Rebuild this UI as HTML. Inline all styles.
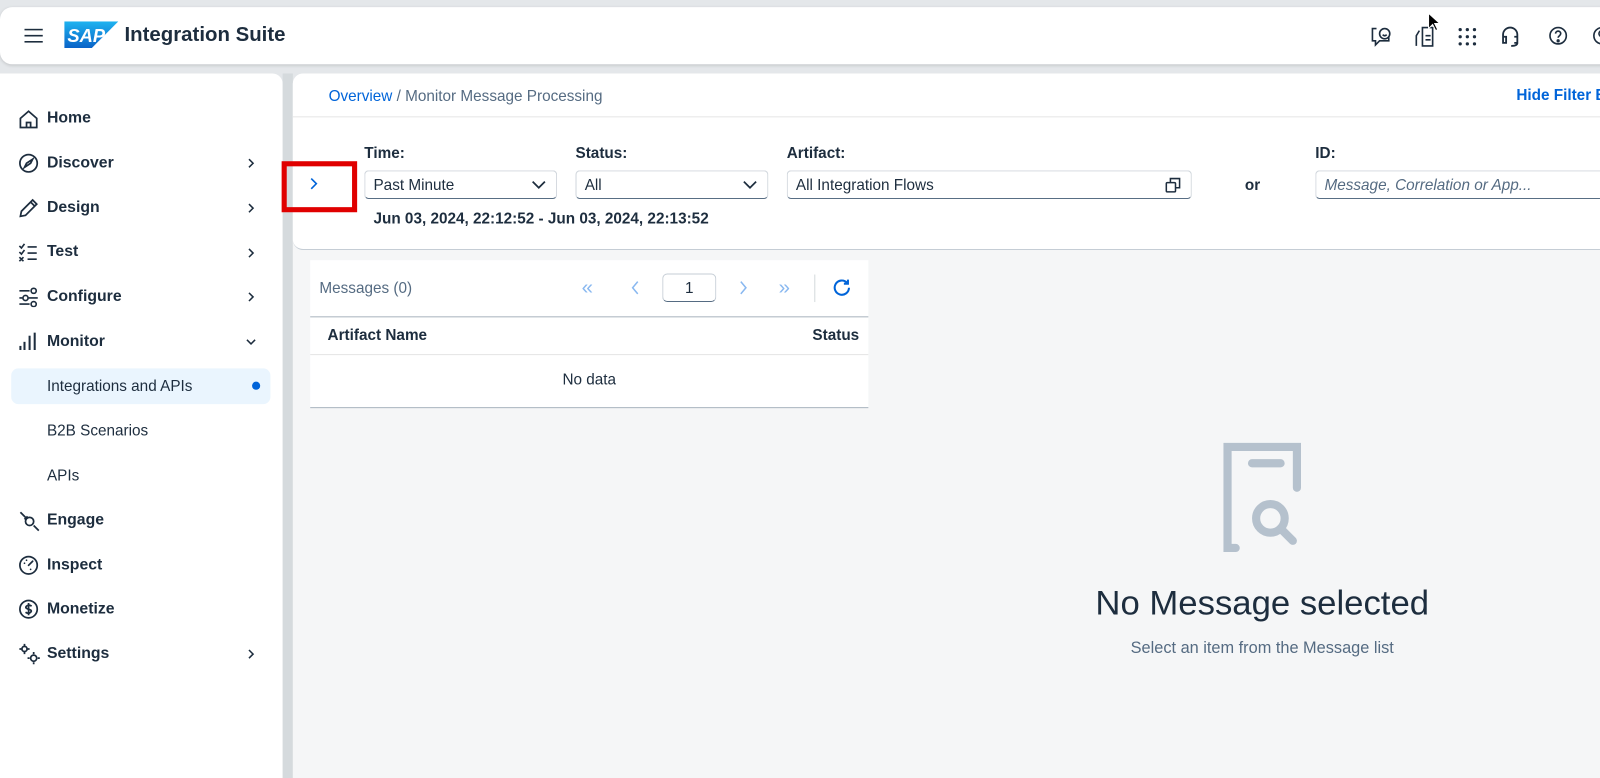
<!DOCTYPE html>
<html><head><meta charset="utf-8"><style>
*{box-sizing:border-box;margin:0;padding:0}
html,body{width:1600px;height:778px;overflow:hidden;background:#e4e7ea}
#c{position:absolute;left:0;top:0;width:1600px;height:778px;overflow:hidden}
#w{position:absolute;left:0;top:0;width:1568px;height:763px;overflow:hidden;transform:scale(1.0204);transform-origin:0 0;font-family:"Liberation Sans",sans-serif;color:#1d2d3e}
.hdr{position:absolute;left:0;top:7px;width:1620px;height:56px;background:#fff;border-radius:12px;box-shadow:0 1px 3px rgba(0,0,0,.15)}
.side{position:absolute;left:0;top:72px;width:277px;height:720px;background:#fff;border-radius:0 10px 0 0}
.main{position:absolute;left:287px;top:72px;width:1330px;height:720px;background:#f5f6f7;border-radius:10px 0 0 0}
.fb{position:absolute;left:0;top:0;width:1330px;height:173px;background:#fff;border-radius:10px 0 0 10px;border-bottom:1px solid #c5cdd5}
.ab{position:absolute}
.nav{position:absolute;left:46px;font-size:15.5px;font-weight:bold}
.ic{position:absolute;left:18px}
.chev{position:absolute;left:240px}
.sub{position:absolute;left:46px;font-size:15px}
.lbl{position:absolute;font-size:15px;font-weight:bold}
.inp{position:absolute;height:28px;border:1px solid #d0d6dc;border-bottom:1px solid #556b82;border-radius:4px;background:#fff;font-size:15px;padding:5px 8px}
</style></head><body><div id="c"><div id="w">
<div class="hdr">
 <svg class="ab" style="left:24px;top:21px" width="18" height="14"><path d="M0 1h18M0 7h18M0 13h18" stroke="#1d2d3e" stroke-width="1.6"/></svg>
 <svg class="ab" style="left:63px;top:14px" width="53" height="26"><defs><linearGradient id="g" x1="0" y1="0" x2="0" y2="1"><stop offset="0" stop-color="#1eb3f0"/><stop offset="1" stop-color="#0a63c8"/></linearGradient></defs><path d="M0 0H53L27 26H0Z" fill="url(#g)"/><text x="3" y="20" font-family="Liberation Sans" font-weight="bold" font-style="italic" font-size="18" fill="#fff">SAP</text></svg>
 <div class="ab" style="left:122px;top:16px;font-size:20px;font-weight:bold">Integration Suite</div>
 <svg class="ab" style="left:1343px;top:18px" width="22" height="22" fill="none" stroke="#1d2d3e" stroke-width="1.6"><path d="M6 3H2v12h3v4l4-4h9v-4"/><circle cx="14" cy="8" r="5"/><path d="M12 9q2 2 4 0"/></svg>
 <svg class="ab" style="left:1386px;top:16px" width="22" height="24" fill="none" stroke="#1d2d3e" stroke-width="1.6"><path d="M5 7L2 12v10M8 4h10v18H8zM11 12h5M11 16h5"/></svg>
 <svg class="ab" style="left:1429px;top:20px" width="18" height="18" fill="#1d2d3e"><circle cx="2" cy="2" r="1.6"/><circle cx="9" cy="2" r="1.6"/><circle cx="16" cy="2" r="1.6"/><circle cx="2" cy="9" r="1.6"/><circle cx="9" cy="9" r="1.6"/><circle cx="16" cy="9" r="1.6"/><circle cx="2" cy="16" r="1.6"/><circle cx="9" cy="16" r="1.6"/><circle cx="16" cy="16" r="1.6"/></svg>
 <svg class="ab" style="left:1470px;top:18px" width="20" height="22" fill="none" stroke="#1d2d3e" stroke-width="1.8"><path d="M3 12V9a7 7 0 0114 0v3M3 11h3v6H3zM14 11h3v6h-3M17 17q0 3-6 3"/></svg>
 <svg class="ab" style="left:1517px;top:18px" width="20" height="20" fill="none" stroke="#1d2d3e" stroke-width="1.6"><circle cx="10" cy="10" r="8"/><path d="M7.5 8a2.5 2.5 0 115 0c0 2-2.5 2-2.5 4"/><circle cx="10" cy="15" r=".8" fill="#1d2d3e"/></svg>
 <svg class="ab" style="left:1560px;top:18px" width="20" height="20" fill="none" stroke="#1d2d3e" stroke-width="1.6"><circle cx="10" cy="10" r="8"/><circle cx="10" cy="8" r="3"/></svg>
</div>
<svg class="ab" style="left:1399px;top:12px" width="14" height="20"><path d="M1 1v15l4-4 3 6 2-1-3-6h5z" fill="#000" stroke="#fff" stroke-width="1"/></svg>
<div class="side">
 <svg class="ic" style="top:35px" width="20" height="20" fill="none" stroke="#1d2d3e" stroke-width="1.7"><path d="M2 9l8-7 8 7v9H2zM8 18v-5h4v5"/></svg><div class="nav" style="top:35px">Home</div>
 <svg class="ic" style="top:78px" width="20" height="20" fill="none" stroke="#1d2d3e" stroke-width="1.7"><circle cx="10" cy="10" r="8.5"/><path d="M14 6l-6 4-2 4 6-4z"/></svg><div class="nav" style="top:79px">Discover</div>
 <svg class="ic" style="top:122px" width="20" height="20" fill="none" stroke="#1d2d3e" stroke-width="1.7"><path d="M2 18l1-5L14 2l4 4L7 17zM12 4l4 4"/></svg><div class="nav" style="top:123px">Design</div>
 <svg class="ic" style="top:166px" width="20" height="20" fill="none" stroke="#1d2d3e" stroke-width="1.6"><path d="M1 3l2 2 3-4M1 9l2 2 3-4M1 14l4 4M5 14l-4 4M9 4h9M9 10h9M9 16h9"/></svg><div class="nav" style="top:166px">Test</div>
 <svg class="ic" style="top:209px" width="20" height="20" fill="none" stroke="#1d2d3e" stroke-width="1.6"><path d="M1 4h10M1 11h3M10 11h9M1 17h10"/><circle cx="15" cy="4" r="2.5"/><circle cx="7" cy="11" r="2.5"/><circle cx="15" cy="17" r="2.5"/></svg><div class="nav" style="top:210px">Configure</div>
 <svg class="ic" style="top:253px" width="20" height="20" fill="#1d2d3e"><rect x="1" y="14" width="2" height="4"/><rect x="5" y="10" width="2" height="8"/><rect x="10" y="4" width="2" height="14"/><rect x="15" y="1" width="2" height="17"/></svg><div class="nav" style="top:254px">Monitor</div>
 <div style="position:absolute;left:11px;top:289px;width:254px;height:35px;background:#eaf5fe;border-radius:7px"></div>
 <div class="sub" style="top:298px">Integrations and APIs</div>
 <div style="position:absolute;left:247px;top:302px;width:8px;height:8px;border-radius:50%;background:#0064d9"></div>
 <div class="sub" style="top:342px">B2B Scenarios</div>
 <div class="sub" style="top:386px">APIs</div>
 <svg class="ic" style="top:428px" width="22" height="22" fill="none" stroke="#1d2d3e" stroke-width="1.7"><path d="M2 2l5 5M15 15l5 5"/><circle cx="11" cy="11" r="4"/><path d="M6 9l3-3"/></svg><div class="nav" style="top:429px">Engage</div>
 <svg class="ic" style="top:472px" width="20" height="20" fill="none" stroke="#1d2d3e" stroke-width="1.7"><circle cx="10" cy="10" r="8.5"/><path d="M10 10l4-4M6 8v0M8 5v0M12 14h0" stroke-linecap="round"/></svg><div class="nav" style="top:473px">Inspect</div>
 <svg class="ic" style="top:515px" width="20" height="20" fill="none" stroke="#1d2d3e" stroke-width="1.7"><circle cx="10" cy="10" r="8.5"/><path d="M13 7q-3-2-5 0t2 3 2 3-5 0M10 4v12"/></svg><div class="nav" style="top:516px">Monetize</div>
 <svg class="ic" style="top:558px" width="22" height="22" fill="none" stroke="#1d2d3e" stroke-width="1.7"><circle cx="6" cy="6" r="2.5"/><circle cx="15" cy="15" r="3"/><path d="M6 1v2M6 9v2M1 6h2M9 6h2M15 9v2M15 19v2M9 15h2M19 15h2"/></svg><div class="nav" style="top:560px">Settings</div>
 <svg class="chev" style="top:82px" width="12" height="12" fill="none" stroke="#1d2d3e" stroke-width="1.5"><path d="M4 2l4 4-4 4"/></svg>
 <svg class="chev" style="top:126px" width="12" height="12" fill="none" stroke="#1d2d3e" stroke-width="1.5"><path d="M4 2l4 4-4 4"/></svg>
 <svg class="chev" style="top:170px" width="12" height="12" fill="none" stroke="#1d2d3e" stroke-width="1.5"><path d="M4 2l4 4-4 4"/></svg>
 <svg class="chev" style="top:213px" width="12" height="12" fill="none" stroke="#1d2d3e" stroke-width="1.5"><path d="M4 2l4 4-4 4"/></svg>
 <svg class="chev" style="top:257px" width="12" height="12" fill="none" stroke="#1d2d3e" stroke-width="1.5"><path d="M2 4l4 4 4-4"/></svg>
 <svg class="chev" style="top:563px" width="12" height="12" fill="none" stroke="#1d2d3e" stroke-width="1.5"><path d="M4 2l4 4-4 4"/></svg>
</div>
<div style="position:absolute;left:277px;top:72px;width:10px;height:710px;background:#d5dadd"></div>
<div class="main">
 <div class="fb">
  <div class="ab" style="left:35px;top:14px;font-size:15px;color:#556b82"><span style="color:#0064d9">Overview</span> / Monitor Message Processing</div>
  <div class="ab" style="left:1199px;top:13px;font-size:15px;font-weight:bold;color:#0064d9">Hide Filter Bar</div>
  <div style="position:absolute;left:0;top:42px;width:1330px;height:1px;background:#e5e5e5"></div>
  <div class="lbl" style="left:70px;top:70px">Time:</div>
  <div class="lbl" style="left:277px;top:70px">Status:</div>
  <div class="lbl" style="left:484px;top:70px">Artifact:</div>
  <div class="lbl" style="left:1002px;top:70px">ID:</div>
  <div class="inp" style="left:70px;top:95px;width:189px">Past Minute<svg class="ab" style="right:10px;top:8px" width="14" height="10" fill="none" stroke="#1d2d3e" stroke-width="1.7"><path d="M1 2l6 6 6-6"/></svg></div>
  <div class="inp" style="left:277px;top:95px;width:189px">All<svg class="ab" style="right:10px;top:8px" width="14" height="10" fill="none" stroke="#1d2d3e" stroke-width="1.7"><path d="M1 2l6 6 6-6"/></svg></div>
  <div class="inp" style="left:484px;top:95px;width:397px">All Integration Flows<svg class="ab" style="right:10px;top:6px" width="15" height="15" fill="none" stroke="#1d2d3e" stroke-width="1.5"><rect x="1" y="5" width="9" height="9" rx="1"/><path d="M5 5V1h9v9h-4"/></svg></div>
  <div class="lbl" style="left:933px;top:101px">or</div>
  <div class="inp" style="left:1002px;top:95px;width:340px;color:#556b82;font-style:italic">Message, Correlation or App...<svg class="ab" style="right:20px;top:6px" width="15" height="15" fill="none" stroke="#1d2d3e" stroke-width="1.5"><circle cx="7" cy="7" r="6"/></svg></div>
  <div class="ab" style="left:79px;top:134px;font-size:15px;font-weight:bold">Jun 03, 2024, 22:12:52 - Jun 03, 2024, 22:13:52</div>
  <div style="position:absolute;left:-11px;top:86px;width:74px;height:50px;border:5px solid #e00000"></div>
  <svg class="ab" style="left:16px;top:102px" width="10" height="12" fill="none" stroke="#0064d9" stroke-width="1.6"><path d="M2 1l5 5-5 5"/></svg>
 </div>
 <div style="position:absolute;left:17px;top:183px;width:547px;height:145px;background:#fff;border-bottom:1px solid #a9b4be">
  <div class="ab" style="left:9px;top:19px;font-size:15px;color:#556b82">Messages (0)</div>
  <div class="ab" style="left:266px;top:16px;font-size:20px;color:#89b8f0">«</div>
  <svg class="ab" style="left:314px;top:20px" width="10" height="14" fill="none" stroke="#89b8f0" stroke-width="1.5"><path d="M7 1L2 7l5 6"/></svg>
  <div class="ab" style="left:345px;top:13px;width:53px;height:28px;border:1px solid #c5cdd5;border-bottom-color:#556b82;border-radius:5px;text-align:center;font-size:15px;padding-top:5px">1</div>
  <svg class="ab" style="left:419px;top:20px" width="10" height="14" fill="none" stroke="#89b8f0" stroke-width="1.5"><path d="M3 1l5 6-5 6"/></svg>
  <div class="ab" style="left:459px;top:16px;font-size:20px;color:#89b8f0">»</div>
  <div class="ab" style="left:494px;top:14px;width:1px;height:27px;background:#d5dadd"></div>
  <svg class="ab" style="left:511px;top:17px" width="20" height="20" fill="none" stroke="#0064d9" stroke-width="2"><path d="M17 10a7 7 0 11-2-5M16 2v4h-4"/></svg>
  <div style="position:absolute;left:0;top:55px;width:547px;height:1px;background:#a9b4be"></div>
  <div class="ab" style="left:17px;top:65px;font-size:15px;font-weight:bold">Artifact Name</div>
  <div class="ab" style="right:9px;top:65px;font-size:15px;font-weight:bold">Status</div>
  <div style="position:absolute;left:0;top:92px;width:547px;height:1px;background:#e5e5e5"></div>
  <div class="ab" style="left:0;width:547px;top:109px;text-align:center;font-size:15px">No data</div>
 </div>
 <svg class="ab" style="left:910px;top:360px" width="84" height="110" fill="none" stroke="#b5c1cd" stroke-width="8" stroke-linecap="round"><path d="M14 105H6V6h68v40M30 22h28"/><circle cx="48" cy="76" r="14"/><path d="M58 86l12 12"/></svg>
 <div class="ab" style="left:700px;width:500px;top:500px;text-align:center;font-size:34px;color:#1d2d3e">No Message selected</div>
 <div class="ab" style="left:700px;width:500px;top:555px;text-align:center;font-size:16px;color:#556b82">Select an item from the Message list</div>
</div>
</div></div></body></html>
